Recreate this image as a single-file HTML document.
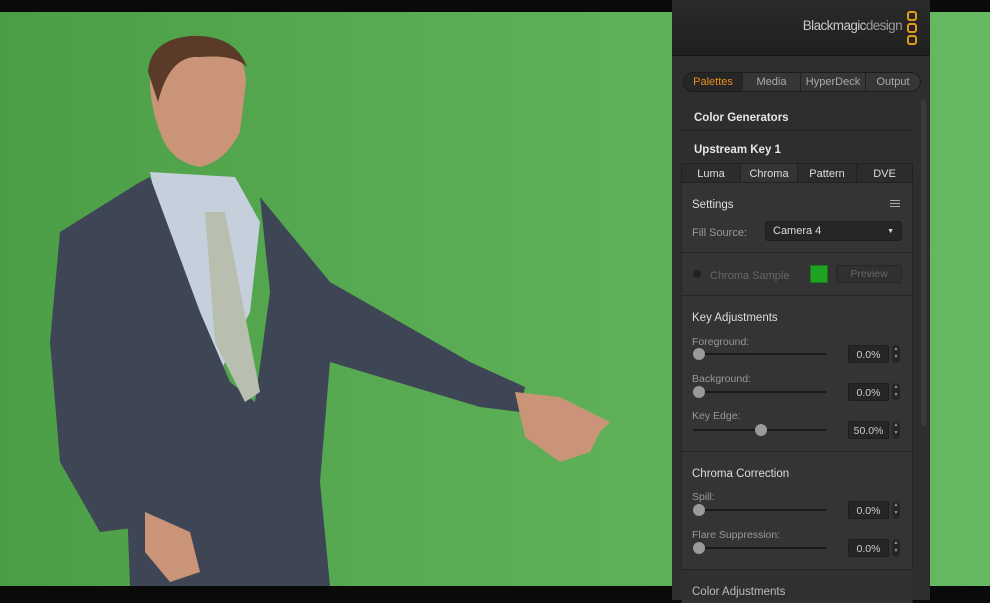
<!DOCTYPE html>
<html><head><style>
*{margin:0;padding:0;box-sizing:border-box}
body{width:990px;height:600px;overflow:hidden;background:#0a0a0a;font-family:"Liberation Sans",sans-serif;position:relative}
.a{position:absolute}
.tx{margin-top:2px}
.green{left:0;top:12px;width:990px;height:574px;background:linear-gradient(90deg,#4b9e46 0%,#58ab52 40%,#66b862 100%)}
.panel{left:672px;top:0;width:258px;height:600px;background:#2e2e2e}
.hdr{left:672px;top:0;width:258px;height:56px;background:linear-gradient(#2b2b2b,#1f1f1f);border-bottom:1px solid #151515}
.t{color:#bdbdbd;font-size:11px}
.b{color:#e6e6e6;font-size:11.5px;font-weight:bold}
.sec{left:681px;width:232px;background:#343434;border-left:1px solid #262626;border-right:1px solid #262626}
.slider{height:2px;background:#1a1a1a;width:133px;left:693px}
.knob{width:12px;height:12px;border-radius:50%;background:#9a9a9a}
.val{width:41px;height:18px;background:#262626;border:1px solid #1e1e1e;border-radius:2px;color:#ccc;font-size:10.5px;text-align:center;line-height:16px;left:848px;padding-top:1px}
.spin{width:8px;height:18px;border-radius:4px;background:#262626;left:892px;color:#999;font-size:5px;text-align:center;line-height:8px}
</style></head><body>
<div class="a green"></div>
<svg class="a" style="left:0;top:12px" width="672" height="574">
<path d="M150 50 Q175 22 215 28 Q245 38 246 70 L240 120 Q225 150 200 155 Q170 150 160 120 Q148 90 150 50Z" fill="#c99477"/>
<path d="M148 60 Q150 28 190 24 Q235 22 247 55 Q235 42 200 45 Q170 42 158 90 Z" fill="#5a3a28"/>
<path d="M150 160 L235 165 L260 210 L250 300 L210 380 L170 260Z" fill="#c6cfdc"/>
<path d="M140 170 L60 220 L50 330 L60 450 L100 520 L140 515 L125 440 L130 574 L330 574 L320 470 L330 350 L480 395 L520 400 L525 375 L470 350 L330 270 L260 185 L270 280 L255 390 L230 370 L200 300 L150 165Z" fill="#3e4656"/>
<path d="M205 200 L225 200 L260 380 L245 390 L215 330Z" fill="#b8bfae"/>
<path d="M515 380 L560 385 L610 410 L600 420 L590 440 L560 450 L525 425Z" fill="#c99477"/>
<path d="M145 500 L190 520 L200 560 L170 570 L145 540Z" fill="#c99477"/>
</svg>
<div class="a panel"></div>
<div class="a hdr"></div>
<div class="a" style="left:742px;top:18px;width:160px;text-align:right;color:#c8c8c8;font-size:13.5px;letter-spacing:-0.6px;white-space:nowrap">Blackmagic<span style="color:#9a9a9a">design</span></div>
<div class="a" style="left:907px;top:11px;width:10px;height:34px">
<div style="width:10px;height:10px;border:2px solid #e09a1e;border-radius:3px;margin-bottom:2px"></div>
<div style="width:10px;height:10px;border:2px solid #e09a1e;border-radius:3px;margin-bottom:2px"></div>
<div style="width:10px;height:10px;border:2px solid #e09a1e;border-radius:3px"></div></div>
<div class="a" style="left:683px;top:72px;width:238px;height:20px;border-radius:10px;background:#363636;border:1px solid #1c1c1c;display:flex;font-size:11px;color:#aaa;line-height:19px;overflow:hidden">
<div style="width:58px;text-align:center;color:#e8901a;background:#262626">Palettes</div>
<div style="width:58px;text-align:center;border-left:1px solid #222">Media</div>
<div style="width:65px;text-align:center;border-left:1px solid #222">HyperDeck</div>
<div style="flex:1;text-align:center;border-left:1px solid #222">Output</div></div>
<div class="a" style="left:921px;top:100px;width:5px;height:326px;border-radius:3px;background:#3a3a3a"></div>
<div class="a b tx" style="left:694px;top:110px">Color Generators</div>
<div class="a" style="left:681px;top:130px;width:232px;height:1px;background:#222"></div>
<div class="a b tx" style="left:694px;top:142px">Upstream Key 1</div>
<div class="a" style="left:681px;top:163px;width:232px;height:20px;display:flex;font-size:11px;color:#ddd;line-height:20px;background:#2c2c2c;border:1px solid #222">
<div style="width:58px;text-align:center">Luma</div>
<div style="width:58px;text-align:center;background:#343434;border-left:1px solid #222;border-right:1px solid #222">Chroma</div>
<div style="width:59px;text-align:center;border-right:1px solid #222">Pattern</div>
<div style="flex:1;text-align:center">DVE</div></div>
<div class="a sec" style="top:183px;height:420px"></div>
<div class="a" style="left:681px;top:252px;width:232px;height:1px;background:#262626"></div>
<div class="a" style="left:681px;top:295px;width:232px;height:1px;background:#262626"></div>
<div class="a" style="left:681px;top:451px;width:232px;height:1px;background:#262626"></div>
<div class="a" style="left:681px;top:569px;width:232px;height:1px;background:#262626"></div>
<div class="a" style="left:681px;top:570px;width:232px;height:30px;background:#303030"></div>
<div class="a tx" style="left:692px;top:197px;color:#ddd;font-size:11.5px">Settings</div>
<div class="a" style="left:890px;top:200px;width:10px"><div style="height:1px;background:#aaa;margin-bottom:2px"></div><div style="height:1px;background:#aaa;margin-bottom:2px"></div><div style="height:1px;background:#aaa"></div></div>
<div class="a t tx" style="left:692px;top:225px;color:#999">Fill Source:</div>
<div class="a" style="left:765px;top:221px;width:137px;height:20px;background:#262626;border:1px solid #1e1e1e;border-radius:3px;color:#ddd;font-size:11px;line-height:19px;padding-left:7px">Camera 4<span style="position:absolute;right:7px;font-size:7px">▼</span></div>
<div class="a" style="left:693px;top:270px;width:8px;height:8px;border-radius:50%;background:#222"></div>
<div class="a t tx" style="left:710px;top:268px;color:#666">Chroma Sample</div>
<div class="a" style="left:810px;top:265px;width:18px;height:18px;background:#1ea322;border:1px solid #157a18"></div>
<div class="a" style="left:836px;top:265px;width:66px;height:18px;background:#303030;border:1px solid #262626;border-radius:3px;color:#666;font-size:10.5px;text-align:center;line-height:17px">Preview</div>
<div class="a tx" style="left:692px;top:310px;color:#ddd;font-size:11.5px">Key Adjustments</div>
<div class="a t tx" style="left:692px;top:334px;color:#999;font-size:10.5px">Foreground:</div>
<div class="a slider" style="top:353px"></div><div class="a knob" style="left:693px;top:348px"></div>
<div class="a val" style="top:345px">0.0%</div><div class="a spin" style="top:345px">▲<br>▼</div>
<div class="a t tx" style="left:692px;top:371px;color:#999;font-size:10.5px">Background:</div>
<div class="a slider" style="top:391px"></div><div class="a knob" style="left:693px;top:386px"></div>
<div class="a val" style="top:383px">0.0%</div><div class="a spin" style="top:383px">▲<br>▼</div>
<div class="a t tx" style="left:692px;top:408px;color:#999;font-size:10.5px">Key Edge:</div>
<div class="a slider" style="top:429px"></div><div class="a knob" style="left:755px;top:424px"></div>
<div class="a val" style="top:421px">50.0%</div><div class="a spin" style="top:421px">▲<br>▼</div>
<div class="a tx" style="left:692px;top:466px;color:#ddd;font-size:11.5px">Chroma Correction</div>
<div class="a t tx" style="left:692px;top:489px;color:#999;font-size:10.5px">Spill:</div>
<div class="a slider" style="top:509px"></div><div class="a knob" style="left:693px;top:504px"></div>
<div class="a val" style="top:501px">0.0%</div><div class="a spin" style="top:501px">▲<br>▼</div>
<div class="a t tx" style="left:692px;top:527px;color:#999;font-size:10.5px">Flare Suppression:</div>
<div class="a slider" style="top:547px"></div><div class="a knob" style="left:693px;top:542px"></div>
<div class="a val" style="top:539px">0.0%</div><div class="a spin" style="top:539px">▲<br>▼</div>
<div class="a tx" style="left:692px;top:584px;color:#bbb;font-size:11.5px">Color Adjustments</div>
</body></html>
